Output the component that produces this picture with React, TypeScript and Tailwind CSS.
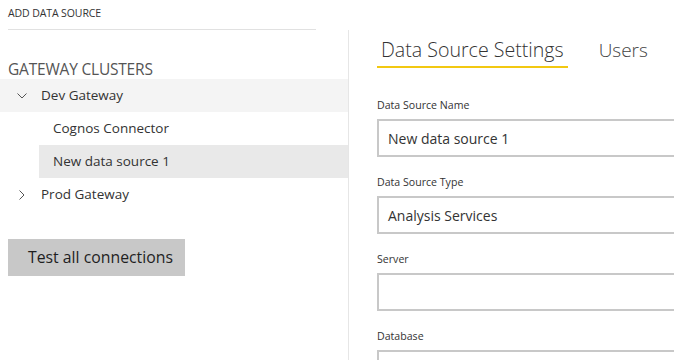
import { ReactNode } from 'react';

function ChevronDown() {
  return (
    <svg width="10" height="6" viewBox="0 0 10 6" fill="none" className="text-[#555]">
      <path d="M0.5 0.5L5 5L9.5 0.5" stroke="currentColor" strokeWidth="1" />
    </svg>
  );
}

function ChevronRight() {
  return (
    <svg width="6" height="10" viewBox="0 0 6 10" fill="none" className="text-[#555]">
      <path d="M0.5 0.5L5 5L0.5 9.5" stroke="currentColor" strokeWidth="1" />
    </svg>
  );
}

function Field({ label, value }: { label: string; value?: string }) {
  return (
    <div className="mb-[18px]">
      <div className="text-[10.6px] leading-[14px] text-[#333] mb-[7px]">{label}</div>
      <div className="w-[340px] h-[38px] border-2 border-[#c8c8c8] flex items-center pl-[9px] text-[14px] text-[#333]">
        {value}
      </div>
    </div>
  );
}

function TreeRow({ children, className }: { children: ReactNode; className?: string }) {
  return <div className={`h-[33px] flex items-center text-[13.5px] text-[#333] ${className ?? ''}`}>{children}</div>;
}

export default function App() {
  return (
    <div
      className="w-[674px] h-[360px] overflow-hidden bg-white flex"
      style={{ fontFamily: '"Open Sans", "Noto Sans", sans-serif' }}
    >
      {/* Left: gateway tree */}
      <div className="w-[348px] shrink-0">
        <div className="mx-2 w-[308px] h-[30px] border-b border-[#e1e1e1] pt-[7px] text-[10.5px] leading-[12px] text-[#333] tracking-[-0.1px]">
          ADD DATA SOURCE
        </div>
        <div className="px-2 pt-[30px] text-[15.5px] leading-[19px] text-[#555] tracking-[-0.2px]">GATEWAY CLUSTERS</div>
        <div>
          <TreeRow className="bg-[#f4f4f4]">
            <span className="w-[41px] flex justify-center pl-[3px]">
              <ChevronDown />
            </span>
            <span>Dev Gateway</span>
          </TreeRow>
          <TreeRow className="pl-[53px]">Cognos Connector</TreeRow>
          <TreeRow className="ml-[39px] pl-[14px] bg-[#e9e9e9]">New data source 1</TreeRow>
          <TreeRow>
            <span className="w-[41px] flex justify-center pl-[3px]">
              <ChevronRight />
            </span>
            <span>Prod Gateway</span>
          </TreeRow>
        </div>
        <button className="ml-2 mt-[28px] w-[177px] h-[37px] bg-[#c8c8c8] text-left pl-[20px] text-[15.8px] text-[#1f1f1f]">
          Test all connections
        </button>
      </div>

      {/* Right: settings */}
      <div className="flex-1 mt-[30px] border-l border-[#e6e6e6] pl-[28px]">
        <div className="flex items-end gap-[31px] h-[38px]">
          <div className="border-b-[2px] border-[#f2c811] px-[4px] pb-[3px] text-[19.6px] leading-[26px] font-light text-[#333]">
            Data Source Settings
          </div>
          <div className="pb-[5px] text-[19px] leading-[26px] font-light text-[#444]">Users</div>
        </div>
        <div className="pt-[30px]">
          <Field label="Data Source Name" value="New data source 1" />
          <Field label="Data Source Type" value="Analysis Services" />
          <Field label="Server" />
          <Field label="Database" />
        </div>
      </div>
    </div>
  );
}
